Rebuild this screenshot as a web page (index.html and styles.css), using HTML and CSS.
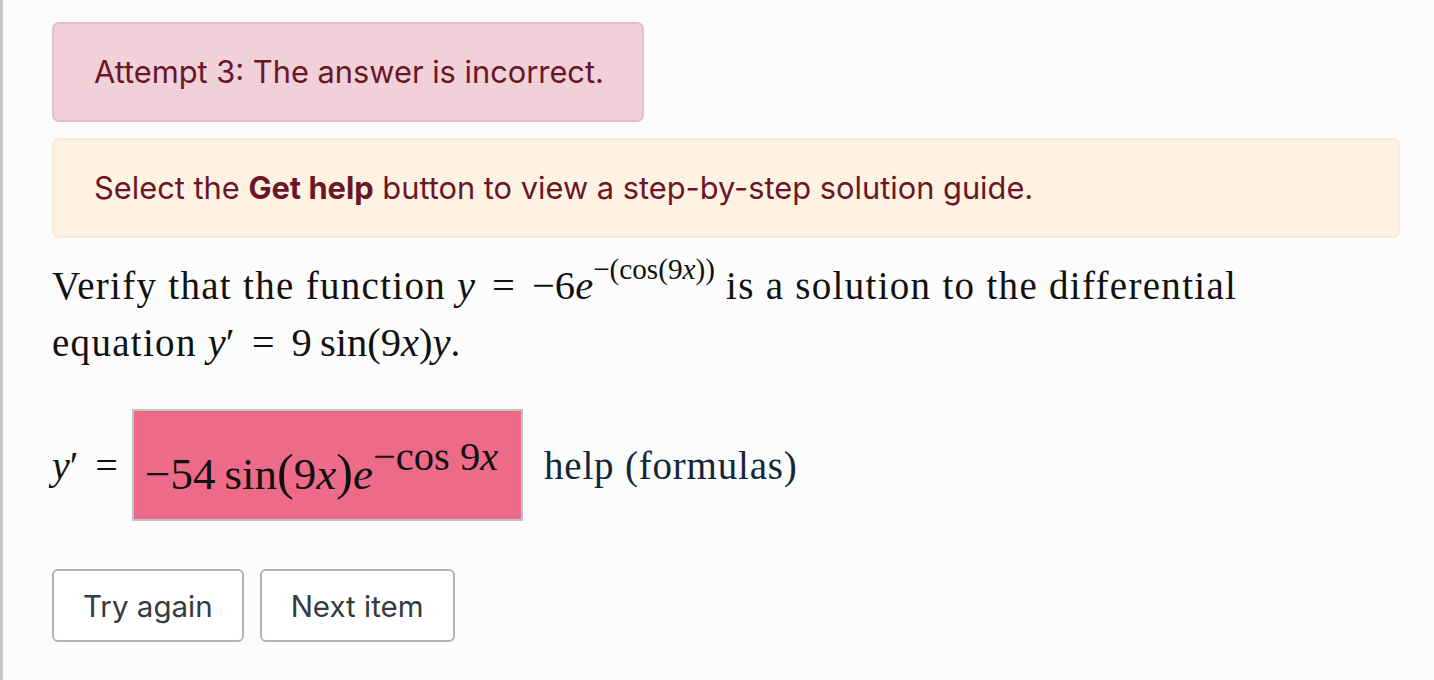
FILE: index.html
```html
<!DOCTYPE html>
<html lang="en">
<head>
    <meta charset="UTF-8">
    <meta name="viewport" content="width=device-width, initial-scale=1.0">
    <title>Attempt 3</title>
    <link rel="stylesheet" href="styles.css">
</head>
<body>
    <div class="page">
        <div class="alert alert-danger">Attempt 3: The answer is incorrect.</div>

        <div class="alert alert-warning">Select the <b>Get help</b> button to view a step-by-step solution guide.</div>

        <p class="question">
            Verify that the function
            <span class="math"><i>y</i><span class="rel">=</span>−6<i>e</i><sup>−(cos(9<i>x</i>))</sup></span>
            is a solution to the differential equation
            <span class="math"><i>y</i>′<span class="rel">=</span>9&thinsp;sin(9<i>x</i>)<i>y</i></span>.
        </p>

        <div class="answer-row">
            <span class="math lhs"><i>y</i>′<span class="rel">=</span></span>
            <div class="answer-box">
                <span class="answer-math">−54&thinsp;sin<span class="paren">(</span>9<i>x</i><span class="paren">)</span><i>e</i><sup>−cos 9<i>x</i></sup></span>
            </div>
            <a class="help-link">help (formulas)</a>
        </div>

        <div class="actions">
            <button class="btn">Try again</button>
            <button class="btn">Next item</button>
        </div>
    </div>
</body>
</html>
```
FILE: styles.css
```css
* {
    box-sizing: border-box;
    margin: 0;
    padding: 0;
}

body {
    font-family: Inter, "Liberation Sans", Arial, sans-serif;
    background-color: #fcfcfc;
    color: #111;
    min-height: 100vh;
    border-left: 3px solid #c4c7cc;
}

.page {
    padding: 22px 34px 0 49px;
    display: flex;
    flex-direction: column;
    align-items: flex-start;
}

.alert {
    border-radius: 7px;
    font-size: 30.8px;
    line-height: 96px;
    color: #6b1628;
    padding: 0 40px;
    height: 100px;
    white-space: nowrap;
}

.alert-danger {
    background: #f0d0d9;
    border: 2px solid #e9bccb;
    width: 592px;
}

.alert-warning {
    background: #fef3e2;
    border: 2px solid #fcebd0;
    width: 100%;
    margin-top: 16px;
}

.alert b {
    font-weight: 700;
}

.question {
    font-family: "Liberation Serif", "Times New Roman", serif;
    font-size: 39px;
    letter-spacing: 1.3px;
    line-height: 57px;
    color: #111;
    margin-top: 19px;
    max-width: 1290px;
}

.math {
    letter-spacing: 0;
    font-size: 1.04em;
}

.math i {
    font-style: italic;
}

.rel {
    margin: 0 0.42em;
}

.math sup {
    font-size: 0.72em;
    vertical-align: 0.68em;
    line-height: 0;
}

.answer-row {
    display: flex;
    align-items: center;
    margin-top: 38px;
}

.lhs {
    font-family: "Liberation Serif", "Times New Roman", serif;
    font-size: 40px;
    width: 80px;
}

.answer-box {
    width: 391px;
    height: 112px;
    background: #ee6a89;
    border: 2px solid #c4c4c4;
    display: flex;
    align-items: center;
    padding: 14px 0 0 11px;
}

.answer-math {
    font-family: "Liberation Serif", "Times New Roman", serif;
    font-size: 45px;
    color: #111;
    white-space: nowrap;
}

.answer-math i {
    font-style: italic;
}

.answer-math .paren {
    font-size: 1.12em;
}

.answer-math sup {
    font-size: 0.9em;
    vertical-align: 0.46em;
    line-height: 0;
}

.help-link {
    font-family: "Liberation Serif", "Times New Roman", serif;
    font-size: 39px;
    letter-spacing: 0.8px;
    color: #14263a;
    margin-left: 21px;
}

.actions {
    display: flex;
    gap: 16px;
    margin-top: 48px;
}

.btn {
    font-family: Inter, "Liberation Sans", Arial, sans-serif;
    font-size: 29.5px;
    color: #343a40;
    background: #fff;
    border: 2px solid #aeb3ba;
    border-radius: 6px;
    height: 73px;
    padding: 0 29px;
    cursor: pointer;
}
```
